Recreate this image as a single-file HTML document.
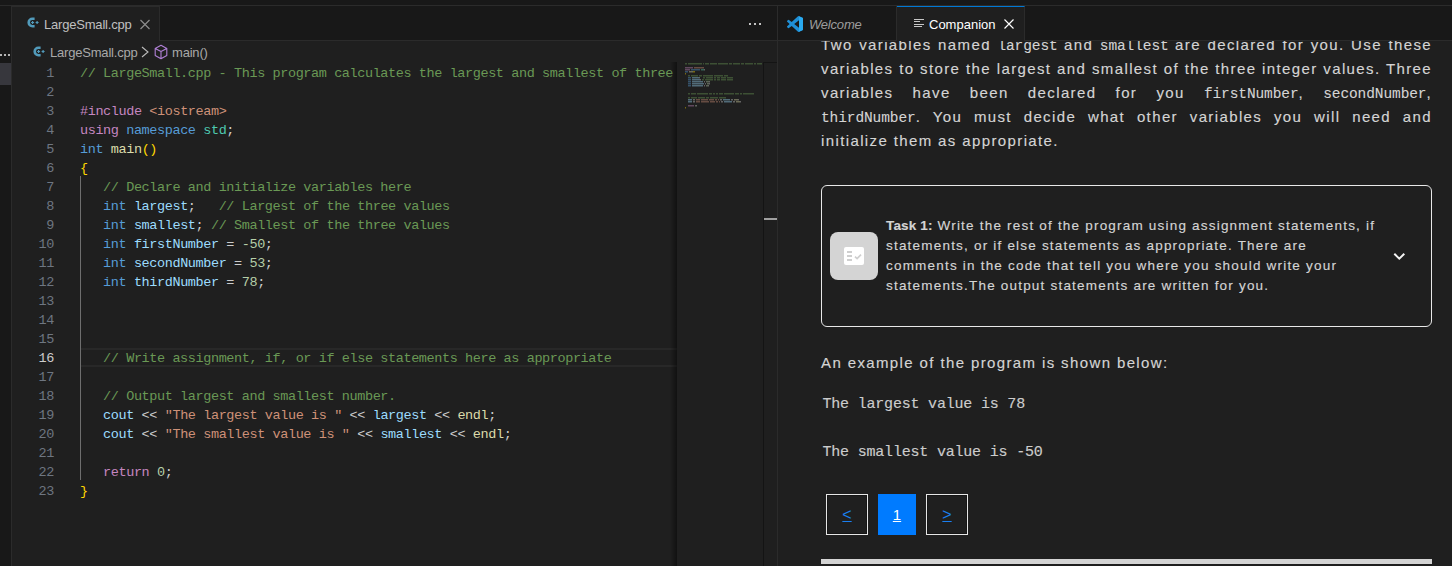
<!DOCTYPE html>
<html><head><meta charset="utf-8">
<style>

*{margin:0;padding:0;box-sizing:border-box}
html,body{width:1452px;height:566px;overflow:hidden;background:#1f1f1f}
body{position:relative;font-family:"Liberation Sans",sans-serif}
.abs{position:absolute}
/* chrome */
#topstrip{left:0;top:0;width:1452px;height:5px;background:#181818}
#sidebar{left:0;top:5px;width:11px;height:561px;background:#181818}
#sidesel{left:0;top:63px;width:11px;height:22px;background:#37373d}
#sideborder{left:11px;top:5px;width:1px;height:561px;background:#2b2b2b}
#tabbarL{left:12px;top:5px;width:765px;height:36px;background:#181818;border-top:1px solid #2b2b2b;border-bottom:1px solid #2b2b2b}
#tabL{left:12px;top:5px;width:148px;height:36px;background:#1f1f1f;border-top:1px solid #2b2b2b;border-right:1px solid #2b2b2b;border-top-width:2px}
.tabtxt{font-size:13px;color:#9d9d9d;white-space:nowrap;line-height:16px;letter-spacing:-0.2px}
#divider{left:777px;top:5px;width:1px;height:561px;background:#2b2b2b}
#tabbarR{left:778px;top:5px;width:674px;height:36px;background:#181818;border-top:1px solid #2b2b2b;border-bottom:1px solid #2b2b2b}
#tabWelcome{left:778px;top:6px;width:119px;height:34px;background:#181818;border-right:1px solid #2b2b2b}
#tabComp{left:897px;top:6px;width:128px;height:35px;background:#1f1f1f;border-top:1px solid #0078d4;border-right:1px solid #2b2b2b}
/* editor */
#code{left:12px;top:62px;width:665px;height:504px;overflow:hidden}
.ln{position:absolute;left:0;width:42px;text-align:right;font-family:"Liberation Mono",monospace;font-size:13.5px;letter-spacing:-0.4px;color:#6e7681;height:19px;line-height:19px;padding-top:2px}
.cl{position:absolute;left:68px;white-space:pre;font-family:"Liberation Mono",monospace;font-size:13.5px;letter-spacing:-0.4px;color:#cccccc;height:19px;line-height:19px;padding-top:2px}
.c{color:#6a9955}.k{color:#c586c0}.s{color:#ce9178}.t{color:#569cd6}.ns{color:#4ec9b0}.f{color:#dcdcaa}.v{color:#9cdcfe}.n{color:#b5cea8}.b{color:#ffd700}
#curline{left:68px;top:286px;width:597px;height:19px;border-top:2px solid #282828;border-bottom:2px solid #282828}
#guide{left:68px;top:114px;width:1px;height:304px;background:#6e6e6e}
#minimap{left:677px;top:62px;width:86px;height:504px;background:#1f1f1f;overflow:hidden}
#mmshadow{left:670px;top:62px;width:7px;height:504px;background:linear-gradient(to right,rgba(0,0,0,0),rgba(0,0,0,0.45))}
#mmtext{left:8px;top:1px;width:77px;height:60px}
.mm{position:absolute;height:2px;border-top:1px solid currentColor;border-bottom:1px solid color-mix(in srgb,currentColor 50%,transparent);opacity:0.4}
#scrollv{left:763px;top:62px;width:14px;height:504px;background:#1f1f1f;border-left:1px solid #141414;border-top:1px solid #141414}
#ruler{left:764px;top:218px;width:13px;height:2px;background:#a0a0a0}
/* companion */
#comp{left:778px;top:41px;width:674px;height:525px;overflow:hidden;color:#d4d4d4;-webkit-text-stroke:0.15px currentColor}
.p{position:absolute;left:43px;width:611px;font-size:15px;line-height:24px;white-space:nowrap;letter-spacing:1.38px}
.j{text-align:justify;text-align-last:justify}
.mono{font-family:"Liberation Mono",monospace;font-size:14.5px;letter-spacing:-0.1px;-webkit-text-stroke:0.1px currentColor}

#card{left:43px;top:144px;width:611px;height:142px;border:1px solid #e8e8e8;border-radius:6px}
#ticon{left:52px;top:191px;width:48px;height:48px;background:#d4d4d4;border-radius:8px}
#tdoc{left:14px;top:15px;width:20px;height:18px;background:#ffffff;border-radius:2px}
.tl{left:17px;width:5px;height:2px;background:#cfcfcf}
.task{position:absolute;left:108px;font-size:13.5px;line-height:20px;white-space:nowrap;letter-spacing:1.2px}
.task b{font-weight:bold;letter-spacing:0.15px}
.out{position:absolute;left:44.5px;font-family:"Liberation Mono",monospace;font-size:15px;letter-spacing:-0.2px;line-height:20px;white-space:pre;color:#cccccc}
.pbtn{-webkit-text-stroke:0;width:42px;height:41px;border:1px solid #e6e6e6;box-shadow:inset 0 0 0 1px #151515;color:#1a7ff0;font-size:16px;line-height:39px;text-align:center}
.pbtn.act{width:38px;background:#007bff;border:none;box-shadow:none;color:#fff;line-height:41px;font-size:15px}
#hbar{left:43px;top:518px;width:611px;height:5px;background:#d4d4d4}
.ln.act{color:#cccccc}

</style></head><body>

<div class="abs" id="topstrip"></div>
<div class="abs" id="sidebar"></div>
<div class="abs" id="sidesel"></div>
<div class="abs" id="sideborder"></div>
<div class="abs" style="left:0;top:5px;width:12px;height:1px;background:#2b2b2b"></div>
<div class="abs" id="tabbarL"></div>
<div class="abs" id="tabL"></div>
<div class="abs tabtxt" style="left:44px;top:17px;color:#c0c0c0">LargeSmall.cpp</div>
<div class="abs" id="divider"></div>
<div class="abs" id="tabbarR"></div>
<div class="abs" id="tabWelcome"></div>
<div class="abs" id="tabComp"></div>
<div class="abs tabtxt" style="left:809px;top:17px;font-style:italic">Welcome</div>
<div class="abs tabtxt" style="left:929px;top:17px;color:#ffffff;letter-spacing:0">Companion</div>


<!-- icons -->
<svg class="abs" style="left:25px;top:15px" width="16" height="14" viewBox="0 0 16 14"><path d="M9.6 3.8 H7.4 A3.7 3.7 0 0 0 7.4 11.2 H9.6" stroke="#519aba" stroke-width="2.6" fill="none"/><path d="M6.1 7.5H9.1M7.6 6V9M10.6 7.5H13.6M12.1 6V9" stroke="#519aba" stroke-width="1.2"/></svg>
<svg class="abs" style="left:31px;top:44px" width="16" height="14" viewBox="0 0 16 14"><path d="M9.6 3.8 H7.4 A3.7 3.7 0 0 0 7.4 11.2 H9.6" stroke="#519aba" stroke-width="2.6" fill="none"/><path d="M6.1 7.5H9.1M7.6 6V9M10.6 7.5H13.6M12.1 6V9" stroke="#519aba" stroke-width="1.2"/></svg>
<svg class="abs" style="left:139px;top:19px" width="12" height="11" viewBox="0 0 12 11"><path d="M1.5 1L10.5 10M10.5 1L1.5 10" stroke="#8c8c8c" stroke-width="1.2"/></svg>
<svg class="abs" style="left:140px;top:46px" width="10" height="12" viewBox="0 0 10 12"><path d="M2 1L8 6L2 11" stroke="#bbbbbb" stroke-width="1.1" fill="none"/></svg>
<svg class="abs" style="left:153px;top:44px" width="16" height="16" viewBox="0 0 16 16"><path d="M8 1.3L13.8 4.4V11.6L8 14.7L2.2 11.6V4.4Z M2.2 4.4L8 7.5L13.8 4.4 M8 7.5V14.7" stroke="#b180d7" stroke-width="1.1" fill="none" stroke-linejoin="round"/></svg>
<div class="abs" style="left:0;top:54px;width:2px;height:2px;background:#b4b4b4"></div>
<div class="abs" style="left:4px;top:54px;width:2px;height:2px;background:#b4b4b4"></div>
<div class="abs" style="left:8px;top:54px;width:2px;height:2px;background:#b4b4b4"></div>
<div class="abs" style="left:748.5px;top:23px;width:2px;height:2px;background:#c4c4c4"></div>
<div class="abs" style="left:753.5px;top:23px;width:2px;height:2px;background:#c4c4c4"></div>
<div class="abs" style="left:758.5px;top:23px;width:2px;height:2px;background:#c4c4c4"></div>
<svg class="abs" style="left:787px;top:16px" width="16" height="16" viewBox="0 0 100 100"><path fill="#1f8fd6" d="M96.46 10.8L75.86.87a6.23 6.23 0 0 0-7.1 1.2L29.35 38.04 12.17 25.01a4.16 4.16 0 0 0-5.31.24L1.36 30.25a4.160 4.16 0 0 0 0 6.15L16.26 50 1.36 63.6a4.16 4.16 0 0 0 0 6.15l5.5 5a4.16 4.16 0 0 0 5.31.24l17.18-13.04 39.41 35.960a6.23 6.23 0 0 0 7.1 1.2l20.6-9.92a6.25 6.25 0 0 0 3.54-5.63V16.43a6.25 6.25 0 0 0-3.54-5.63zM75.02 72.7L45.11 50l29.9-22.7z"/><path fill="#2aaaf0" d="M75 1 L96.46 10.8 a6.25 6.25 0 0 1 3.54 5.63 V83.57 a6.25 6.25 0 0 1-3.54 5.63 L75 99Z"/></svg>
<div class="abs" style="left:914px;top:18.7px;width:9.5px;height:1.3px;background:#c8c8c8"></div>
<div class="abs" style="left:914px;top:21.2px;width:5.5px;height:1.3px;background:#c8c8c8"></div>
<div class="abs" style="left:914px;top:23.7px;width:9.5px;height:1.3px;background:#c8c8c8"></div>
<div class="abs" style="left:914px;top:26.2px;width:7.5px;height:1.3px;background:#c8c8c8"></div>
<svg class="abs" style="left:1003px;top:18px" width="12" height="12" viewBox="0 0 12 12"><path d="M1.5 1.5L10.5 10.5M10.5 1.5L1.5 10.5" stroke="#ffffff" stroke-width="1.15"/></svg>

<!-- breadcrumbs -->
<div class="abs tabtxt" style="left:50px;top:44.5px;color:#a9a9a9">LargeSmall.cpp</div>
<div class="abs tabtxt" style="left:172px;top:44.5px;color:#a9a9a9">main()</div>

<div class="abs" id="code">
<div class="abs" id="curline"></div>
<div class="abs" id="guide"></div>
<div class="ln" style="top:0px">1</div>
<div class="cl" style="top:0px"><span class="c">// LargeSmall.cpp - This program calculates the largest and smallest of three integers.</span></div>
<div class="ln" style="top:19px">2</div>
<div class="cl" style="top:19px"></div>
<div class="ln" style="top:38px">3</div>
<div class="cl" style="top:38px"><span class="k">#include</span> <span class="s">&lt;iostream&gt;</span></div>
<div class="ln" style="top:57px">4</div>
<div class="cl" style="top:57px"><span class="k">using</span> <span class="t">namespace</span> <span class="ns">std</span>;</div>
<div class="ln" style="top:76px">5</div>
<div class="cl" style="top:76px"><span class="t">int</span> <span class="f">main</span><span class="b">()</span></div>
<div class="ln" style="top:95px">6</div>
<div class="cl" style="top:95px"><span class="b">{</span></div>
<div class="ln" style="top:114px">7</div>
<div class="cl" style="top:114px">   <span class="c">// Declare and initialize variables here</span></div>
<div class="ln" style="top:133px">8</div>
<div class="cl" style="top:133px">   <span class="t">int</span> <span class="v">largest</span>;   <span class="c">// Largest of the three values</span></div>
<div class="ln" style="top:152px">9</div>
<div class="cl" style="top:152px">   <span class="t">int</span> <span class="v">smallest</span>; <span class="c">// Smallest of the three values</span></div>
<div class="ln" style="top:171px">10</div>
<div class="cl" style="top:171px">   <span class="t">int</span> <span class="v">firstNumber</span> = <span class="n">-50</span>;</div>
<div class="ln" style="top:190px">11</div>
<div class="cl" style="top:190px">   <span class="t">int</span> <span class="v">secondNumber</span> = <span class="n">53</span>;</div>
<div class="ln" style="top:209px">12</div>
<div class="cl" style="top:209px">   <span class="t">int</span> <span class="v">thirdNumber</span> = <span class="n">78</span>;</div>
<div class="ln" style="top:228px">13</div>
<div class="cl" style="top:228px"></div>
<div class="ln" style="top:247px">14</div>
<div class="cl" style="top:247px"></div>
<div class="ln" style="top:266px">15</div>
<div class="cl" style="top:266px"></div>
<div class="ln act" style="top:285px">16</div>
<div class="cl" style="top:285px">   <span class="c">// Write assignment, if, or if else statements here as appropriate</span></div>
<div class="ln" style="top:304px">17</div>
<div class="cl" style="top:304px"></div>
<div class="ln" style="top:323px">18</div>
<div class="cl" style="top:323px">   <span class="c">// Output largest and smallest number.</span></div>
<div class="ln" style="top:342px">19</div>
<div class="cl" style="top:342px">   <span class="v">cout</span> &lt;&lt; <span class="s">&quot;The largest value is &quot;</span> &lt;&lt; <span class="v">largest</span> &lt;&lt; <span class="f">endl</span>;</div>
<div class="ln" style="top:361px">20</div>
<div class="cl" style="top:361px">   <span class="v">cout</span> &lt;&lt; <span class="s">&quot;The smallest value is &quot;</span> &lt;&lt; <span class="v">smallest</span> &lt;&lt; <span class="f">endl</span>;</div>
<div class="ln" style="top:380px">21</div>
<div class="cl" style="top:380px"></div>
<div class="ln" style="top:399px">22</div>
<div class="cl" style="top:399px">   <span class="k">return</span> <span class="n">0</span>;</div>
<div class="ln" style="top:418px">23</div>
<div class="cl" style="top:418px"><span class="b">}</span></div>
</div>

<div class="abs" id="mmshadow"></div>
<div class="abs" id="minimap"><div class="abs" id="mmtext">
<div class="mm" style="left:0px;top:0px;width:2px;color:#6a9955"></div>
<div class="mm" style="left:3px;top:0px;width:14px;color:#6a9955"></div>
<div class="mm" style="left:18px;top:0px;width:1px;color:#6a9955"></div>
<div class="mm" style="left:20px;top:0px;width:4px;color:#6a9955"></div>
<div class="mm" style="left:25px;top:0px;width:7px;color:#6a9955"></div>
<div class="mm" style="left:33px;top:0px;width:10px;color:#6a9955"></div>
<div class="mm" style="left:44px;top:0px;width:3px;color:#6a9955"></div>
<div class="mm" style="left:48px;top:0px;width:7px;color:#6a9955"></div>
<div class="mm" style="left:56px;top:0px;width:3px;color:#6a9955"></div>
<div class="mm" style="left:60px;top:0px;width:8px;color:#6a9955"></div>
<div class="mm" style="left:69px;top:0px;width:2px;color:#6a9955"></div>
<div class="mm" style="left:72px;top:0px;width:5px;color:#6a9955"></div>
<div class="mm" style="left:0px;top:4px;width:8px;color:#c586c0"></div>
<div class="mm" style="left:9px;top:4px;width:10px;color:#ce9178"></div>
<div class="mm" style="left:0px;top:6px;width:5px;color:#c586c0"></div>
<div class="mm" style="left:6px;top:6px;width:9px;color:#569cd6"></div>
<div class="mm" style="left:16px;top:6px;width:3px;color:#4ec9b0"></div>
<div class="mm" style="left:19px;top:6px;width:1px;color:#cccccc"></div>
<div class="mm" style="left:0px;top:8px;width:3px;color:#569cd6"></div>
<div class="mm" style="left:4px;top:8px;width:4px;color:#dcdcaa"></div>
<div class="mm" style="left:8px;top:8px;width:2px;color:#ffd700"></div>
<div class="mm" style="left:0px;top:10px;width:1px;color:#ffd700"></div>
<div class="mm" style="left:3px;top:12px;width:2px;color:#6a9955"></div>
<div class="mm" style="left:6px;top:12px;width:7px;color:#6a9955"></div>
<div class="mm" style="left:14px;top:12px;width:3px;color:#6a9955"></div>
<div class="mm" style="left:18px;top:12px;width:10px;color:#6a9955"></div>
<div class="mm" style="left:29px;top:12px;width:9px;color:#6a9955"></div>
<div class="mm" style="left:39px;top:12px;width:4px;color:#6a9955"></div>
<div class="mm" style="left:3px;top:14px;width:3px;color:#569cd6"></div>
<div class="mm" style="left:7px;top:14px;width:7px;color:#9cdcfe"></div>
<div class="mm" style="left:14px;top:14px;width:1px;color:#cccccc"></div>
<div class="mm" style="left:18px;top:14px;width:2px;color:#6a9955"></div>
<div class="mm" style="left:21px;top:14px;width:7px;color:#6a9955"></div>
<div class="mm" style="left:29px;top:14px;width:2px;color:#6a9955"></div>
<div class="mm" style="left:32px;top:14px;width:3px;color:#6a9955"></div>
<div class="mm" style="left:36px;top:14px;width:5px;color:#6a9955"></div>
<div class="mm" style="left:42px;top:14px;width:6px;color:#6a9955"></div>
<div class="mm" style="left:3px;top:16px;width:3px;color:#569cd6"></div>
<div class="mm" style="left:7px;top:16px;width:8px;color:#9cdcfe"></div>
<div class="mm" style="left:15px;top:16px;width:1px;color:#cccccc"></div>
<div class="mm" style="left:17px;top:16px;width:2px;color:#6a9955"></div>
<div class="mm" style="left:20px;top:16px;width:8px;color:#6a9955"></div>
<div class="mm" style="left:29px;top:16px;width:2px;color:#6a9955"></div>
<div class="mm" style="left:32px;top:16px;width:3px;color:#6a9955"></div>
<div class="mm" style="left:36px;top:16px;width:5px;color:#6a9955"></div>
<div class="mm" style="left:42px;top:16px;width:6px;color:#6a9955"></div>
<div class="mm" style="left:3px;top:18px;width:3px;color:#569cd6"></div>
<div class="mm" style="left:7px;top:18px;width:11px;color:#9cdcfe"></div>
<div class="mm" style="left:19px;top:18px;width:1px;color:#cccccc"></div>
<div class="mm" style="left:21px;top:18px;width:3px;color:#b5cea8"></div>
<div class="mm" style="left:24px;top:18px;width:1px;color:#cccccc"></div>
<div class="mm" style="left:3px;top:20px;width:3px;color:#569cd6"></div>
<div class="mm" style="left:7px;top:20px;width:12px;color:#9cdcfe"></div>
<div class="mm" style="left:20px;top:20px;width:1px;color:#cccccc"></div>
<div class="mm" style="left:22px;top:20px;width:2px;color:#b5cea8"></div>
<div class="mm" style="left:24px;top:20px;width:1px;color:#cccccc"></div>
<div class="mm" style="left:3px;top:22px;width:3px;color:#569cd6"></div>
<div class="mm" style="left:7px;top:22px;width:11px;color:#9cdcfe"></div>
<div class="mm" style="left:19px;top:22px;width:1px;color:#cccccc"></div>
<div class="mm" style="left:21px;top:22px;width:2px;color:#b5cea8"></div>
<div class="mm" style="left:23px;top:22px;width:1px;color:#cccccc"></div>
<div class="mm" style="left:3px;top:30px;width:2px;color:#6a9955"></div>
<div class="mm" style="left:6px;top:30px;width:5px;color:#6a9955"></div>
<div class="mm" style="left:12px;top:30px;width:11px;color:#6a9955"></div>
<div class="mm" style="left:24px;top:30px;width:3px;color:#6a9955"></div>
<div class="mm" style="left:28px;top:30px;width:2px;color:#6a9955"></div>
<div class="mm" style="left:31px;top:30px;width:2px;color:#6a9955"></div>
<div class="mm" style="left:34px;top:30px;width:4px;color:#6a9955"></div>
<div class="mm" style="left:39px;top:30px;width:10px;color:#6a9955"></div>
<div class="mm" style="left:50px;top:30px;width:4px;color:#6a9955"></div>
<div class="mm" style="left:55px;top:30px;width:2px;color:#6a9955"></div>
<div class="mm" style="left:58px;top:30px;width:11px;color:#6a9955"></div>
<div class="mm" style="left:3px;top:34px;width:2px;color:#6a9955"></div>
<div class="mm" style="left:6px;top:34px;width:6px;color:#6a9955"></div>
<div class="mm" style="left:13px;top:34px;width:7px;color:#6a9955"></div>
<div class="mm" style="left:21px;top:34px;width:3px;color:#6a9955"></div>
<div class="mm" style="left:25px;top:34px;width:8px;color:#6a9955"></div>
<div class="mm" style="left:34px;top:34px;width:7px;color:#6a9955"></div>
<div class="mm" style="left:3px;top:36px;width:4px;color:#9cdcfe"></div>
<div class="mm" style="left:8px;top:36px;width:2px;color:#cccccc"></div>
<div class="mm" style="left:11px;top:36px;width:4px;color:#ce9178"></div>
<div class="mm" style="left:16px;top:36px;width:7px;color:#ce9178"></div>
<div class="mm" style="left:24px;top:36px;width:5px;color:#ce9178"></div>
<div class="mm" style="left:30px;top:36px;width:2px;color:#ce9178"></div>
<div class="mm" style="left:33px;top:36px;width:1px;color:#ce9178"></div>
<div class="mm" style="left:35px;top:36px;width:2px;color:#cccccc"></div>
<div class="mm" style="left:38px;top:36px;width:7px;color:#9cdcfe"></div>
<div class="mm" style="left:46px;top:36px;width:2px;color:#cccccc"></div>
<div class="mm" style="left:49px;top:36px;width:4px;color:#dcdcaa"></div>
<div class="mm" style="left:53px;top:36px;width:1px;color:#cccccc"></div>
<div class="mm" style="left:3px;top:38px;width:4px;color:#9cdcfe"></div>
<div class="mm" style="left:8px;top:38px;width:2px;color:#cccccc"></div>
<div class="mm" style="left:11px;top:38px;width:4px;color:#ce9178"></div>
<div class="mm" style="left:16px;top:38px;width:8px;color:#ce9178"></div>
<div class="mm" style="left:25px;top:38px;width:5px;color:#ce9178"></div>
<div class="mm" style="left:31px;top:38px;width:2px;color:#ce9178"></div>
<div class="mm" style="left:34px;top:38px;width:1px;color:#ce9178"></div>
<div class="mm" style="left:36px;top:38px;width:2px;color:#cccccc"></div>
<div class="mm" style="left:39px;top:38px;width:8px;color:#9cdcfe"></div>
<div class="mm" style="left:48px;top:38px;width:2px;color:#cccccc"></div>
<div class="mm" style="left:51px;top:38px;width:4px;color:#dcdcaa"></div>
<div class="mm" style="left:55px;top:38px;width:1px;color:#cccccc"></div>
<div class="mm" style="left:3px;top:42px;width:6px;color:#c586c0"></div>
<div class="mm" style="left:10px;top:42px;width:1px;color:#b5cea8"></div>
<div class="mm" style="left:11px;top:42px;width:1px;color:#cccccc"></div>
<div class="mm" style="left:0px;top:44px;width:1px;color:#ffd700"></div>
</div></div>
<div class="abs" id="scrollv"></div>
<div class="abs" id="ruler"></div>

<div class="abs" id="comp">
<div class="p j" style="top:-8px">Two variables named <span class="mono">largest</span> and <span class="mono">smallest</span> are declared for you. Use these</div>
<div class="p j" style="top:16px">variables to store the largest and smallest of the three integer values. Three</div>
<div class="p j" style="top:40px">variables have been declared for you <span class="mono">firstNumber</span>, <span class="mono">secondNumber</span>,</div>
<div class="p j" style="top:64px"><span class="mono">thirdNumber</span>. You must decide what other variables you will need and</div>
<div class="p" style="top:88px">initialize them as appropriate.</div>
<div class="abs" id="card"></div>
<div class="abs" id="ticon"><div class="abs" id="tdoc"></div>
<div class="abs tl" style="top:19px"></div><div class="abs tl" style="top:23px"></div><div class="abs tl" style="top:27px"></div>
<svg class="abs" style="left:24px;top:21px" width="8" height="7" viewBox="0 0 8 7"><path d="M1 3.6 L3.1 5.6 L7 1.6" stroke="#cfcfcf" stroke-width="1.7" fill="none"/></svg>
</div>
<div class="task" style="top:175px"><b>Task 1:</b> Write the rest of the program using assignment statements, if</div>
<div class="task" style="top:195px">statements, or if else statements as appropriate. There are</div>
<div class="task" style="top:215px">comments in the code that tell you where you should write your</div>
<div class="task" style="top:235px">statements.The output statements are written for you.</div>
<svg class="abs" style="left:615px;top:210px" width="13" height="10" viewBox="0 0 13 10"><path d="M1.3 2.8 L6.3 7.6 L11.3 2.8" stroke="#f4f4f4" stroke-width="2" fill="none"/></svg>
<div class="p" style="top:310px">An example of the program is shown below:</div>
<div class="out" style="top:353.5px">The largest value is 78</div>
<div class="out" style="top:401.5px">The smallest value is -50</div>
<div class="abs pbtn" style="left:48px;top:453px"><u>&lt;</u></div>
<div class="abs pbtn act" style="left:100px;top:453px"><u>1</u></div>
<div class="abs pbtn" style="left:148px;top:453px"><u>&gt;</u></div>
<div class="abs" id="hbar"></div>
</div>

</body></html>
